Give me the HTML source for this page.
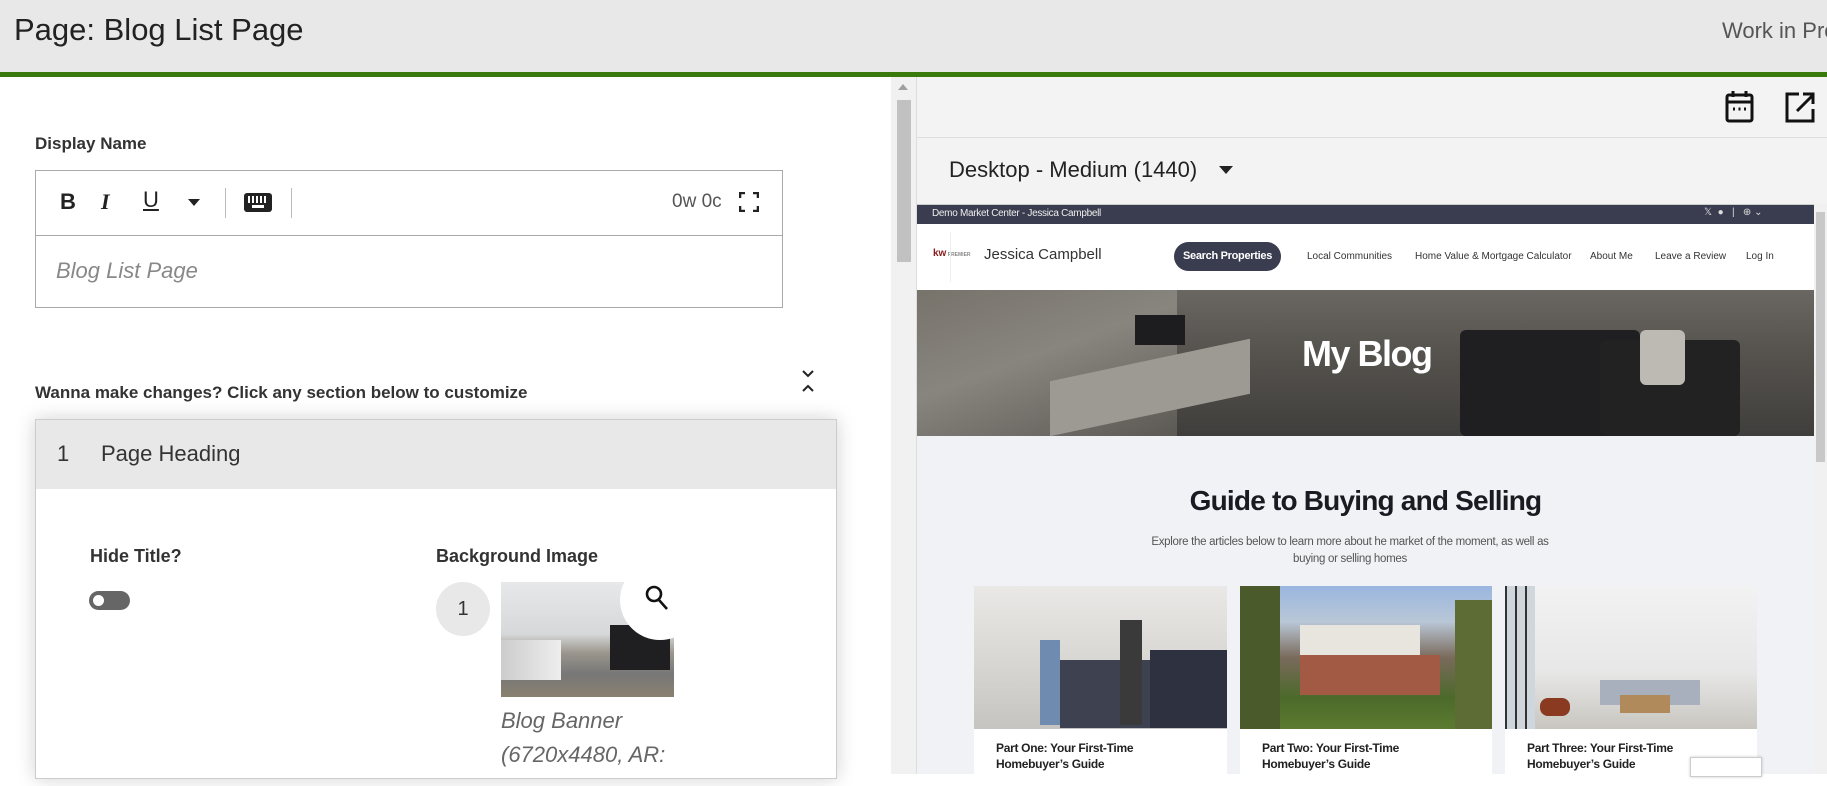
<!DOCTYPE html>
<html><head><meta charset="utf-8">
<style>
*{box-sizing:border-box;margin:0;padding:0}
body{width:1827px;height:774px;overflow:hidden;background:#fff;font-family:"Liberation Sans",sans-serif;color:#222;position:relative}
.abs{position:absolute}
.hdr{left:0;top:0;width:1827px;height:72px;background:#e8e8e8}
.green{left:0;top:72px;width:1827px;height:5px;background:#3a7a0c}
.sb{background:#f1f1f1}
.nav a{position:absolute;font-size:10px;color:#333;top:251px}
</style></head><body>
<div class="abs hdr"></div>
<div class="abs green"></div>
<div class="abs" style="left:14px;top:12px;font-size:31px;color:#222;">Page: Blog List Page</div>
<div class="abs" style="left:1722px;top:18px;font-size:22px;color:#555;white-space:nowrap">Work in Progress</div>

<div class="abs" style="left:35px;top:134px;font-size:17px;font-weight:bold;color:#333">Display Name</div>
<div class="abs" style="left:35px;top:170px;width:748px;height:138px;border:1px solid #aaa"></div>
<div class="abs" style="left:35px;top:235px;width:748px;height:1px;background:#aaa"></div>
<div class="abs" style="left:60px;top:189px;font-size:22px;font-weight:bold">B</div>
<div class="abs" style="left:101px;top:189px;font-size:22px;font-weight:bold;font-style:italic;font-family:'Liberation Serif',serif">I</div>
<div class="abs" style="left:143px;top:187px;font-size:22px;text-decoration:underline">U</div>
<div class="abs" style="left:188px;top:199px;width:0;height:0;border-left:6px solid transparent;border-right:6px solid transparent;border-top:7px solid #222"></div>
<div class="abs" style="left:225px;top:188px;width:1px;height:30px;background:#bbb"></div>
<div class="abs" style="left:244px;top:193px;width:28px;height:19px;background:#222;border-radius:3px"></div>
<div class="abs" style="left:248px;top:196px;width:20px;height:7px;background:repeating-linear-gradient(90deg,#fff 0 2px,#222 2px 4px)"></div>
<div class="abs" style="left:252px;top:205px;width:12px;height:3px;background:#fff"></div>
<div class="abs" style="left:291px;top:188px;width:1px;height:30px;background:#bbb"></div>
<div class="abs" style="left:672px;top:191px;font-size:19px;color:#555">0w 0c</div>
<svg class="abs" style="left:739px;top:192px" width="20" height="20" viewBox="0 0 20 20" fill="none" stroke="#222" stroke-width="2.6"><path d="M1 6V1h5M14 1h5v5M19 14v5h-5M6 19H1v-5"/></svg>
<div class="abs" style="left:56px;top:258px;font-size:22px;font-style:italic;color:#888">Blog List Page</div>

<div class="abs" style="left:35px;top:383px;font-size:17px;font-weight:bold;color:#333">Wanna make changes? Click any section below to customize</div>
<svg class="abs" style="left:801px;top:369px" width="14" height="24" viewBox="0 0 14 24" fill="none" stroke="#222" stroke-width="2"><path d="M2 2l5 5 5-5M2 22l5-5 5 5"/></svg>

<div class="abs" style="left:35px;top:419px;width:802px;height:360px;border:1px solid #ccc;background:#fff;box-shadow:0 0 18px rgba(0,0,0,.18)"></div>
<div class="abs" style="left:36px;top:420px;width:800px;height:69px;background:#e8e8e8"></div>
<div class="abs" style="left:57px;top:441px;font-size:22px;color:#333">1</div>
<div class="abs" style="left:101px;top:441px;font-size:22px;color:#333">Page Heading</div>
<div class="abs" style="left:90px;top:546px;font-size:18px;font-weight:bold;color:#333">Hide Title?</div>
<div class="abs" style="left:89px;top:591px;width:41px;height:19px;border-radius:10px;background:#666"></div>
<div class="abs" style="left:93px;top:595px;width:11px;height:11px;border-radius:50%;background:#fff"></div>
<div class="abs" style="left:436px;top:546px;font-size:18px;font-weight:bold;color:#333">Background Image</div>
<div class="abs" style="left:436px;top:582px;width:54px;height:54px;border-radius:50%;background:#e8e8e8;font-size:20px;text-align:center;line-height:54px;color:#333">1</div>
<div class="abs" style="left:501px;top:582px;width:173px;height:115px;background:linear-gradient(180deg,#e6e8ea 0%,#d6d8da 45%,#9a958c 62%,#777 80%,#8a8070 100%)"></div>
<div class="abs" style="left:501px;top:640px;width:60px;height:40px;background:linear-gradient(90deg,#ccc,#eee)"></div>
<div class="abs" style="left:610px;top:625px;width:60px;height:45px;background:#1f1f22"></div>
<div class="abs" style="left:620px;top:560px;width:80px;height:80px;border-radius:50%;background:#fff"></div>
<svg class="abs" style="left:645px;top:585px" width="24" height="26" viewBox="0 0 24 26" fill="none" stroke="#111" stroke-width="2.6"><circle cx="9" cy="9" r="7"/><path d="M14 15l8 9"/></svg>
<div class="abs" style="left:501px;top:704px;font-size:22px;font-style:italic;color:#666;line-height:34px">Blog Banner<br>(6720x4480, AR:</div>

<div class="abs sb" style="left:891px;top:77px;width:25px;height:697px"></div>
<div class="abs" style="left:897px;top:100px;width:14px;height:162px;background:#c1c1c1"></div>
<div class="abs" style="left:898px;top:84px;width:0;height:0;border-left:5px solid transparent;border-right:5px solid transparent;border-bottom:6px solid #a0a0a0"></div>

<div class="abs" style="left:916px;top:77px;width:911px;height:697px;background:#f3f3f3;border-left:1px solid #ddd"></div>
<div class="abs" style="left:917px;top:137px;width:910px;height:1px;background:#ddd"></div>
<svg class="abs" style="left:1725px;top:90px" width="29" height="33" viewBox="0 0 29 33" fill="none" stroke="#111" stroke-width="3"><rect x="2" y="5" width="25" height="26" rx="2"/><path d="M2 12h25M8 1v6M21 1v6"/><path d="M8 19h2M13.5 19h2M19 19h2" stroke-width="3"/></svg>
<svg class="abs" style="left:1785px;top:92px" width="30" height="31" viewBox="0 0 30 31" fill="none" stroke="#111" stroke-width="3"><path d="M14 2H2v27h26V17"/><path d="M12 19L28 3M18 2h10v10"/></svg>
<div class="abs" style="left:949px;top:157px;font-size:22px;color:#222">Desktop - Medium (1440)</div>
<div class="abs" style="left:1219px;top:166px;width:0;height:0;border-left:7px solid transparent;border-right:7px solid transparent;border-top:8px solid #222"></div>

<div class="abs" style="left:917px;top:204px;width:897px;height:570px;background:#f1f2f5;border-top:1px solid #ccc"></div>
<div class="abs" style="left:1814px;top:204px;width:13px;height:570px;background:#f1f1f1"></div>
<div class="abs" style="left:1816px;top:212px;width:9px;height:250px;background:#c8c8c8"></div>
<div class="abs" style="left:917px;top:205px;width:897px;height:19px;background:#3a3d50"></div>
<div class="abs" style="left:932px;top:208px;font-size:10px;color:#eee;letter-spacing:-.3px">Demo Market Center - Jessica Campbell</div>
<div class="abs" style="left:1704px;top:207px;font-size:10px;color:#ddd;white-space:nowrap">𝕏 &nbsp;● &nbsp; | &nbsp; ⊕ ⌄</div>
<div class="abs" style="left:917px;top:224px;width:897px;height:66px;background:#fff"></div>
<div class="abs" style="left:933px;top:248px;font-size:10px;color:#8a1c1c;font-weight:bold">kw<span style="font-size:5px;color:#888"> PREMIER</span></div>
<div class="abs" style="left:950px;top:232px;width:1px;height:50px;background:#eee"></div>
<div class="abs" style="left:984px;top:246px;font-size:15px;color:#333">Jessica Campbell</div>
<div class="abs" style="left:1174px;top:242px;width:107px;height:29px;border-radius:15px;background:#3a3d50;color:#fff;font-size:11px;font-weight:bold;text-align:center;line-height:29px;letter-spacing:-.3px">Search Properties</div>
<div class="nav">
<a style="left:1307px">Local Communities</a>
<a style="left:1415px">Home Value &amp; Mortgage Calculator</a>
<a style="left:1590px">About Me</a>
<a style="left:1655px">Leave a Review</a>
<a style="left:1746px">Log In</a>
</div>
<div class="abs" style="left:917px;top:290px;width:897px;height:146px;background:linear-gradient(180deg,#6a6763 0%,#57544f 40%,#403e3c 100%)"></div>
<div class="abs" style="left:917px;top:290px;width:260px;height:146px;background:linear-gradient(160deg,#77736b 0%,#88857f 45%,#5c5954 100%)"></div>
<div class="abs" style="left:1050px;top:360px;width:200px;height:55px;background:#9d9a94;transform:skewY(-12deg)"></div>
<div class="abs" style="left:1460px;top:330px;width:180px;height:106px;background:#1f1f22;border-radius:6px"></div>
<div class="abs" style="left:1600px;top:340px;width:140px;height:96px;background:#222;border-radius:6px"></div>
<div class="abs" style="left:1640px;top:330px;width:45px;height:55px;background:#bdbab4;border-radius:6px"></div>
<div class="abs" style="left:1135px;top:315px;width:50px;height:30px;background:#1d1d20"></div>
<div class="abs" style="left:1302px;top:333px;font-size:36px;font-weight:bold;color:#fff;letter-spacing:-1.5px">My Blog</div>

<div class="abs" style="left:917px;top:485px;width:897px;text-align:center;font-size:28px;font-weight:bold;color:#1a1a22;letter-spacing:-.8px">Guide to Buying and Selling</div>
<div class="abs" style="left:1150px;top:534px;width:400px;text-align:center;font-size:11.5px;color:#555;line-height:17px;letter-spacing:-.3px">Explore the articles below to learn more about he market of the moment, as well as buying or selling homes</div>

<div class="abs" style="left:974px;top:586px;width:253px;height:200px;background:#fff"></div>
<div class="abs" style="left:974px;top:586px;width:253px;height:143px;background:linear-gradient(180deg,#e9e8e6 0%,#d8d6d2 55%,#c6c4c0 100%)"></div>
<div class="abs" style="left:1060px;top:660px;width:95px;height:68px;background:#3d4150"></div>
<div class="abs" style="left:1150px;top:650px;width:77px;height:78px;background:#2e3140"></div>
<div class="abs" style="left:1040px;top:640px;width:20px;height:85px;background:#6f8bb0"></div>
<div class="abs" style="left:1120px;top:620px;width:22px;height:105px;background:#3a3a3a"></div>

<div class="abs" style="left:1240px;top:586px;width:252px;height:200px;background:#fff"></div>
<div class="abs" style="left:1240px;top:586px;width:252px;height:143px;background:linear-gradient(180deg,#9ab6e0 0%,#b9c7d6 25%,#7a6a5c 50%,#4c6a2a 78%,#5b7a30 100%)"></div>
<div class="abs" style="left:1300px;top:625px;width:120px;height:70px;background:#e8e4de"></div>
<div class="abs" style="left:1300px;top:655px;width:140px;height:40px;background:#a25a44"></div>
<div class="abs" style="left:1240px;top:586px;width:40px;height:143px;background:#4a5a2a"></div>
<div class="abs" style="left:1455px;top:600px;width:37px;height:129px;background:#5d6b34"></div>

<div class="abs" style="left:1505px;top:586px;width:252px;height:200px;background:#fff"></div>
<div class="abs" style="left:1505px;top:586px;width:252px;height:143px;background:linear-gradient(180deg,#f2f2f2 0%,#e7e7e7 60%,#c9c6c0 100%)"></div>
<div class="abs" style="left:1505px;top:586px;width:30px;height:143px;background:repeating-linear-gradient(90deg,#333 0 2px,#cfd6dc 2px 10px)"></div>
<div class="abs" style="left:1600px;top:680px;width:100px;height:25px;background:#a9b0bd"></div>
<div class="abs" style="left:1620px;top:695px;width:50px;height:18px;background:#b08a5a"></div>
<div class="abs" style="left:1540px;top:698px;width:30px;height:18px;background:#8a3a20;border-radius:8px"></div>

<div class="abs" style="left:996px;top:740px;font-size:12px;font-weight:bold;color:#222;line-height:16px;letter-spacing:-.3px">Part One: Your First-Time<br>Homebuyer’s Guide</div>
<div class="abs" style="left:1262px;top:740px;font-size:12px;font-weight:bold;color:#222;line-height:16px;letter-spacing:-.3px">Part Two: Your First-Time<br>Homebuyer’s Guide</div>
<div class="abs" style="left:1527px;top:740px;font-size:12px;font-weight:bold;color:#222;line-height:16px;letter-spacing:-.3px">Part Three: Your First-Time<br>Homebuyer’s Guide</div>
<div class="abs" style="left:1690px;top:757px;width:72px;height:20px;background:#fff;border:1px solid #ccc;box-shadow:0 0 3px rgba(0,0,0,.2)"></div>
</body></html>
